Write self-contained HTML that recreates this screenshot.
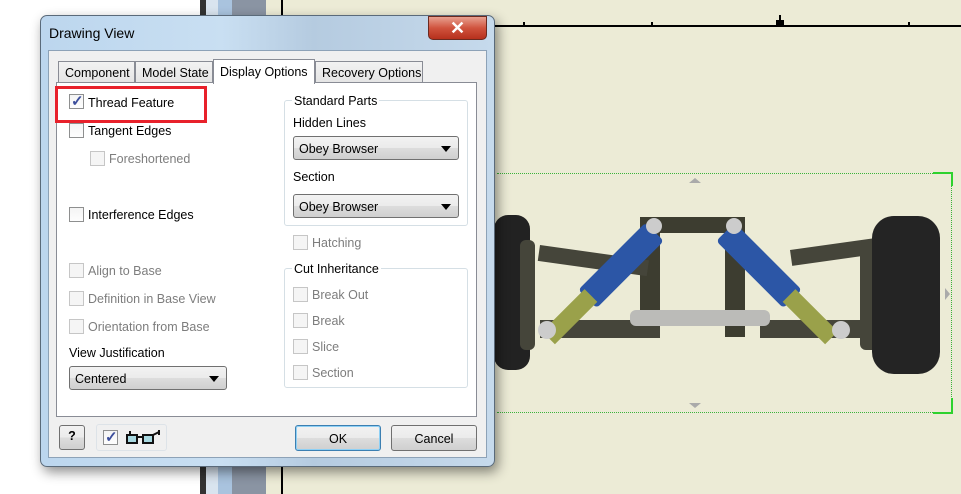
<!DOCTYPE html>
<html><head><meta charset="utf-8"><style>
*{margin:0;padding:0;box-sizing:border-box}
body{width:961px;height:494px;overflow:hidden;position:relative;background:#ecebd6;font-family:"Liberation Sans",sans-serif;font-size:12.5px;color:#000}
.a{position:absolute}
.cb{position:absolute;width:15px;height:15px;border:1px solid #8e8f8f;background:linear-gradient(#f4f4f4,#fdfdfd)}
.dis{color:#7d7d7d}
.cb.d{border-color:#c6c6c6;background:#f5f5f5}
.lbl{position:absolute;white-space:nowrap;margin-top:1px}
.combo{position:absolute;border:1px solid #707070;border-radius:3px;background:linear-gradient(#f2f2f2,#ebebeb 50%,#dddddd 51%,#cfcfcf);height:24px;padding:5px 0 0 5px}
.combo:after{content:"";position:absolute;right:7px;top:9px;border-left:5px solid transparent;border-right:5px solid transparent;border-top:6px solid #000}
.tab{position:absolute;top:61px;height:22px;border:1px solid #898c95;border-bottom:none;background:linear-gradient(#f2f2f2,#e4e4e4);padding:4px 0 0 6px;white-space:nowrap}
.btn{position:absolute;border:1px solid #707070;border-radius:3px;background:linear-gradient(#f2f2f2,#ebebeb 50%,#dddddd 51%,#cfcfcf);text-align:center;padding-top:6px}
</style></head><body>
<div class="a" style="left:0;top:0;width:200px;height:494px;background:#fff"></div>
<div class="a" style="left:200px;top:0;width:6px;height:494px;background:#333"></div>
<div class="a" style="left:206px;top:0;width:12px;height:494px;background:#d9e4ef"></div>
<div class="a" style="left:218px;top:0;width:14px;height:494px;background:#a9c3de"></div>
<div class="a" style="left:232px;top:0;width:34px;height:494px;background:#8a94a3"></div>
<div class="a" style="left:266px;top:0;width:16px;height:494px;background:#ecebd6"></div>
<div class="a" style="left:281px;top:0;width:2px;height:494px;background:#000"></div>
<div class="a" style="left:494px;top:25px;width:467px;height:2px;background:#000"></div>
<div class="a" style="left:523px;top:22px;width:2px;height:4px;background:#000"></div>
<div class="a" style="left:651px;top:22px;width:2px;height:4px;background:#000"></div>
<div class="a" style="left:908px;top:22px;width:2px;height:4px;background:#000"></div>
<div class="a" style="left:779px;top:15px;width:2px;height:10px;background:#000"></div>
<div class="a" style="left:776px;top:20px;width:8px;height:5px;background:#000"></div>
<div class="a" style="left:497px;top:173px;width:442px;height:1px;border-top:1px dotted #3bb33b"></div>
<div class="a" style="left:497px;top:412px;width:442px;height:1px;border-top:1px dotted #3bb33b"></div>
<div class="a" style="left:951px;top:180px;width:1px;height:225px;border-left:1px dotted #3bb33b"></div>
<div class="a" style="left:933px;top:172px;width:20px;height:14px;border-top:2px solid #2ed22e;border-right:2px solid #2ed22e"></div>
<div class="a" style="left:933px;top:398px;width:20px;height:16px;border-bottom:2px solid #2ed22e;border-right:2px solid #2ed22e"></div>
<svg class="a" style="left:480px;top:150px" width="481" height="280">
<g fill="#45453a">
<rect x="14" y="65" width="36" height="155" rx="14" fill="#222"/>
<rect x="160" y="67" width="20" height="120" fill="#3d3d30"/>
<rect x="245" y="67" width="20" height="120" fill="#3d3d30"/>
<rect x="175" y="67" width="80" height="16" fill="#3d3d30"/>
<rect x="60" y="95" width="110" height="16" transform="rotate(8 60 95)"/>
<rect x="310" y="100" width="110" height="16" transform="rotate(-8 310 100)"/>
<rect x="60" y="170" width="120" height="18"/>
<rect x="280" y="170" width="115" height="18"/>
<rect x="40" y="90" width="15" height="110" rx="6"/>
<rect x="380" y="90" width="20" height="110" rx="6"/>
</g>
<rect x="150" y="160" width="140" height="16" rx="6" fill="#bbbbb8"/>
<rect x="392" y="66" width="68" height="158" rx="22" fill="#242424"/>
<g transform="rotate(-45 135 120)"><rect x="95" y="108" width="95" height="26" rx="4" fill="#2c56a6"/><rect x="40" y="112" width="60" height="18" fill="#9aa14a"/></g>
<g transform="rotate(45 285 120)"><rect x="230" y="108" width="95" height="26" rx="4" fill="#2c56a6"/><rect x="320" y="112" width="60" height="18" fill="#9aa14a"/></g>
<circle cx="67" cy="180" r="9" fill="#ccc"/><circle cx="361" cy="180" r="9" fill="#ccc"/>
<circle cx="174" cy="76" r="8" fill="#ccc"/><circle cx="254" cy="76" r="8" fill="#ccc"/>
<path d="M209 33l6-5 6 5z M209 253l6 5 6-5z M465 138v12l5-6z" fill="#aaa"/>
</svg>
<div class="a" style="left:40px;top:15px;width:455px;height:452px;border:1px solid #5a6a7a;border-radius:7px;background:linear-gradient(90deg,#bcd6ee,#c9dff2 40%,#b5cbe0 60%,#c6daec);box-shadow:3px 5px 12px rgba(0,0,0,.45)"></div>
<div class="a" style="left:49px;top:25px;font-size:14px;color:#000">Drawing View</div>
<div class="a" style="left:428px;top:16px;width:59px;height:24px;border:1px solid #6b2a20;border-radius:0 0 5px 5px;background:linear-gradient(#e8a090,#d0533e 50%,#b6301c);color:#fff;font-size:18px;font-weight:bold;text-align:center;line-height:22px">✕</div>
<div class="a" style="left:48px;top:50px;width:439px;height:408px;border:1px solid #8da2b7;background:#f0f0f0"></div>
<div class="tab" style="left:58px;width:77px">Component</div>
<div class="tab" style="left:135px;width:78px">Model State</div>
<div class="tab" style="left:315px;width:108px">Recovery Options</div>
<div class="a" style="left:56px;top:82px;width:421px;height:335px;border:1px solid #898c95;background:#fff"></div>
<div class="tab" style="left:213px;top:59px;width:102px;height:25px;background:#fff;padding-top:5px;border-color:#898c95">Display Options</div>
<div class="cb" style="left:69px;top:94px"></div>
<div class="a" style="left:71px;top:92px;color:#3c4e9c;font-size:15px;font-weight:bold">✓</div>
<div class="lbl" style="left:88px;top:95px">Thread Feature</div>
<div class="a" style="left:55px;top:86px;width:152px;height:37px;border:3px solid #e8212b"></div>
<div class="cb" style="left:69px;top:123px"></div><div class="lbl" style="left:88px;top:123px">Tangent Edges</div>
<div class="cb d" style="left:90px;top:151px"></div><div class="lbl dis" style="left:109px;top:151px">Foreshortened</div>
<div class="cb" style="left:69px;top:207px"></div><div class="lbl" style="left:88px;top:207px">Interference Edges</div>
<div class="cb d" style="left:69px;top:263px"></div><div class="lbl dis" style="left:88px;top:263px">Align to Base</div>
<div class="cb d" style="left:69px;top:291px"></div><div class="lbl dis" style="left:88px;top:291px">Definition in Base View</div>
<div class="cb d" style="left:69px;top:319px"></div><div class="lbl dis" style="left:88px;top:319px">Orientation from Base</div>
<div class="lbl" style="left:69px;top:345px">View Justification</div>
<div class="combo" style="left:69px;top:366px;width:158px">Centered</div>
<div class="a" style="left:284px;top:100px;width:184px;height:126px;border:1px solid #d5dfe5;border-radius:3px"></div>
<div class="lbl" style="left:292px;top:93px;background:#fff;padding:0 2px">Standard Parts</div>
<div class="lbl" style="left:293px;top:115px">Hidden Lines</div>
<div class="combo" style="left:293px;top:136px;width:166px">Obey Browser</div>
<div class="lbl" style="left:293px;top:169px">Section</div>
<div class="combo" style="left:293px;top:194px;width:166px">Obey Browser</div>
<div class="cb d" style="left:293px;top:235px"></div><div class="lbl dis" style="left:312px;top:235px">Hatching</div>
<div class="a" style="left:284px;top:268px;width:184px;height:120px;border:1px solid #d5dfe5;border-radius:3px"></div>
<div class="lbl" style="left:292px;top:261px;background:#fff;padding:0 2px">Cut Inheritance</div>
<div class="cb d" style="left:293px;top:287px"></div><div class="lbl dis" style="left:312px;top:287px">Break Out</div>
<div class="cb d" style="left:293px;top:313px"></div><div class="lbl dis" style="left:312px;top:313px">Break</div>
<div class="cb d" style="left:293px;top:339px"></div><div class="lbl dis" style="left:312px;top:339px">Slice</div>
<div class="cb d" style="left:293px;top:365px"></div><div class="lbl dis" style="left:312px;top:365px">Section</div>
<div class="btn" style="left:59px;top:425px;width:26px;height:25px;padding-top:3px;font-weight:bold">?</div>
<div class="a" style="left:96px;top:424px;width:71px;height:27px;border:1px solid #dde3e8;border-radius:3px"></div>
<div class="cb" style="left:103px;top:430px"></div>
<div class="a" style="left:105px;top:428px;color:#3c4e9c;font-size:15px;font-weight:bold">✓</div>
<svg class="a" style="left:125px;top:429px" width="38" height="16"><path d="M2 6h10v8H2z M18 6h10v8H18z" fill="#a8d8e0" stroke="#111" stroke-width="2"/><path d="M12 8h6 M28 6l6-3 M34 1v5 M5 2v4" stroke="#111" stroke-width="2" fill="none"/></svg>
<div class="btn" style="left:295px;top:425px;width:86px;height:26px;border-color:#3c7fb1;box-shadow:inset 0 0 0 1px #8ed0f5">OK</div>
<div class="btn" style="left:391px;top:425px;width:86px;height:26px">Cancel</div>
</body></html>
